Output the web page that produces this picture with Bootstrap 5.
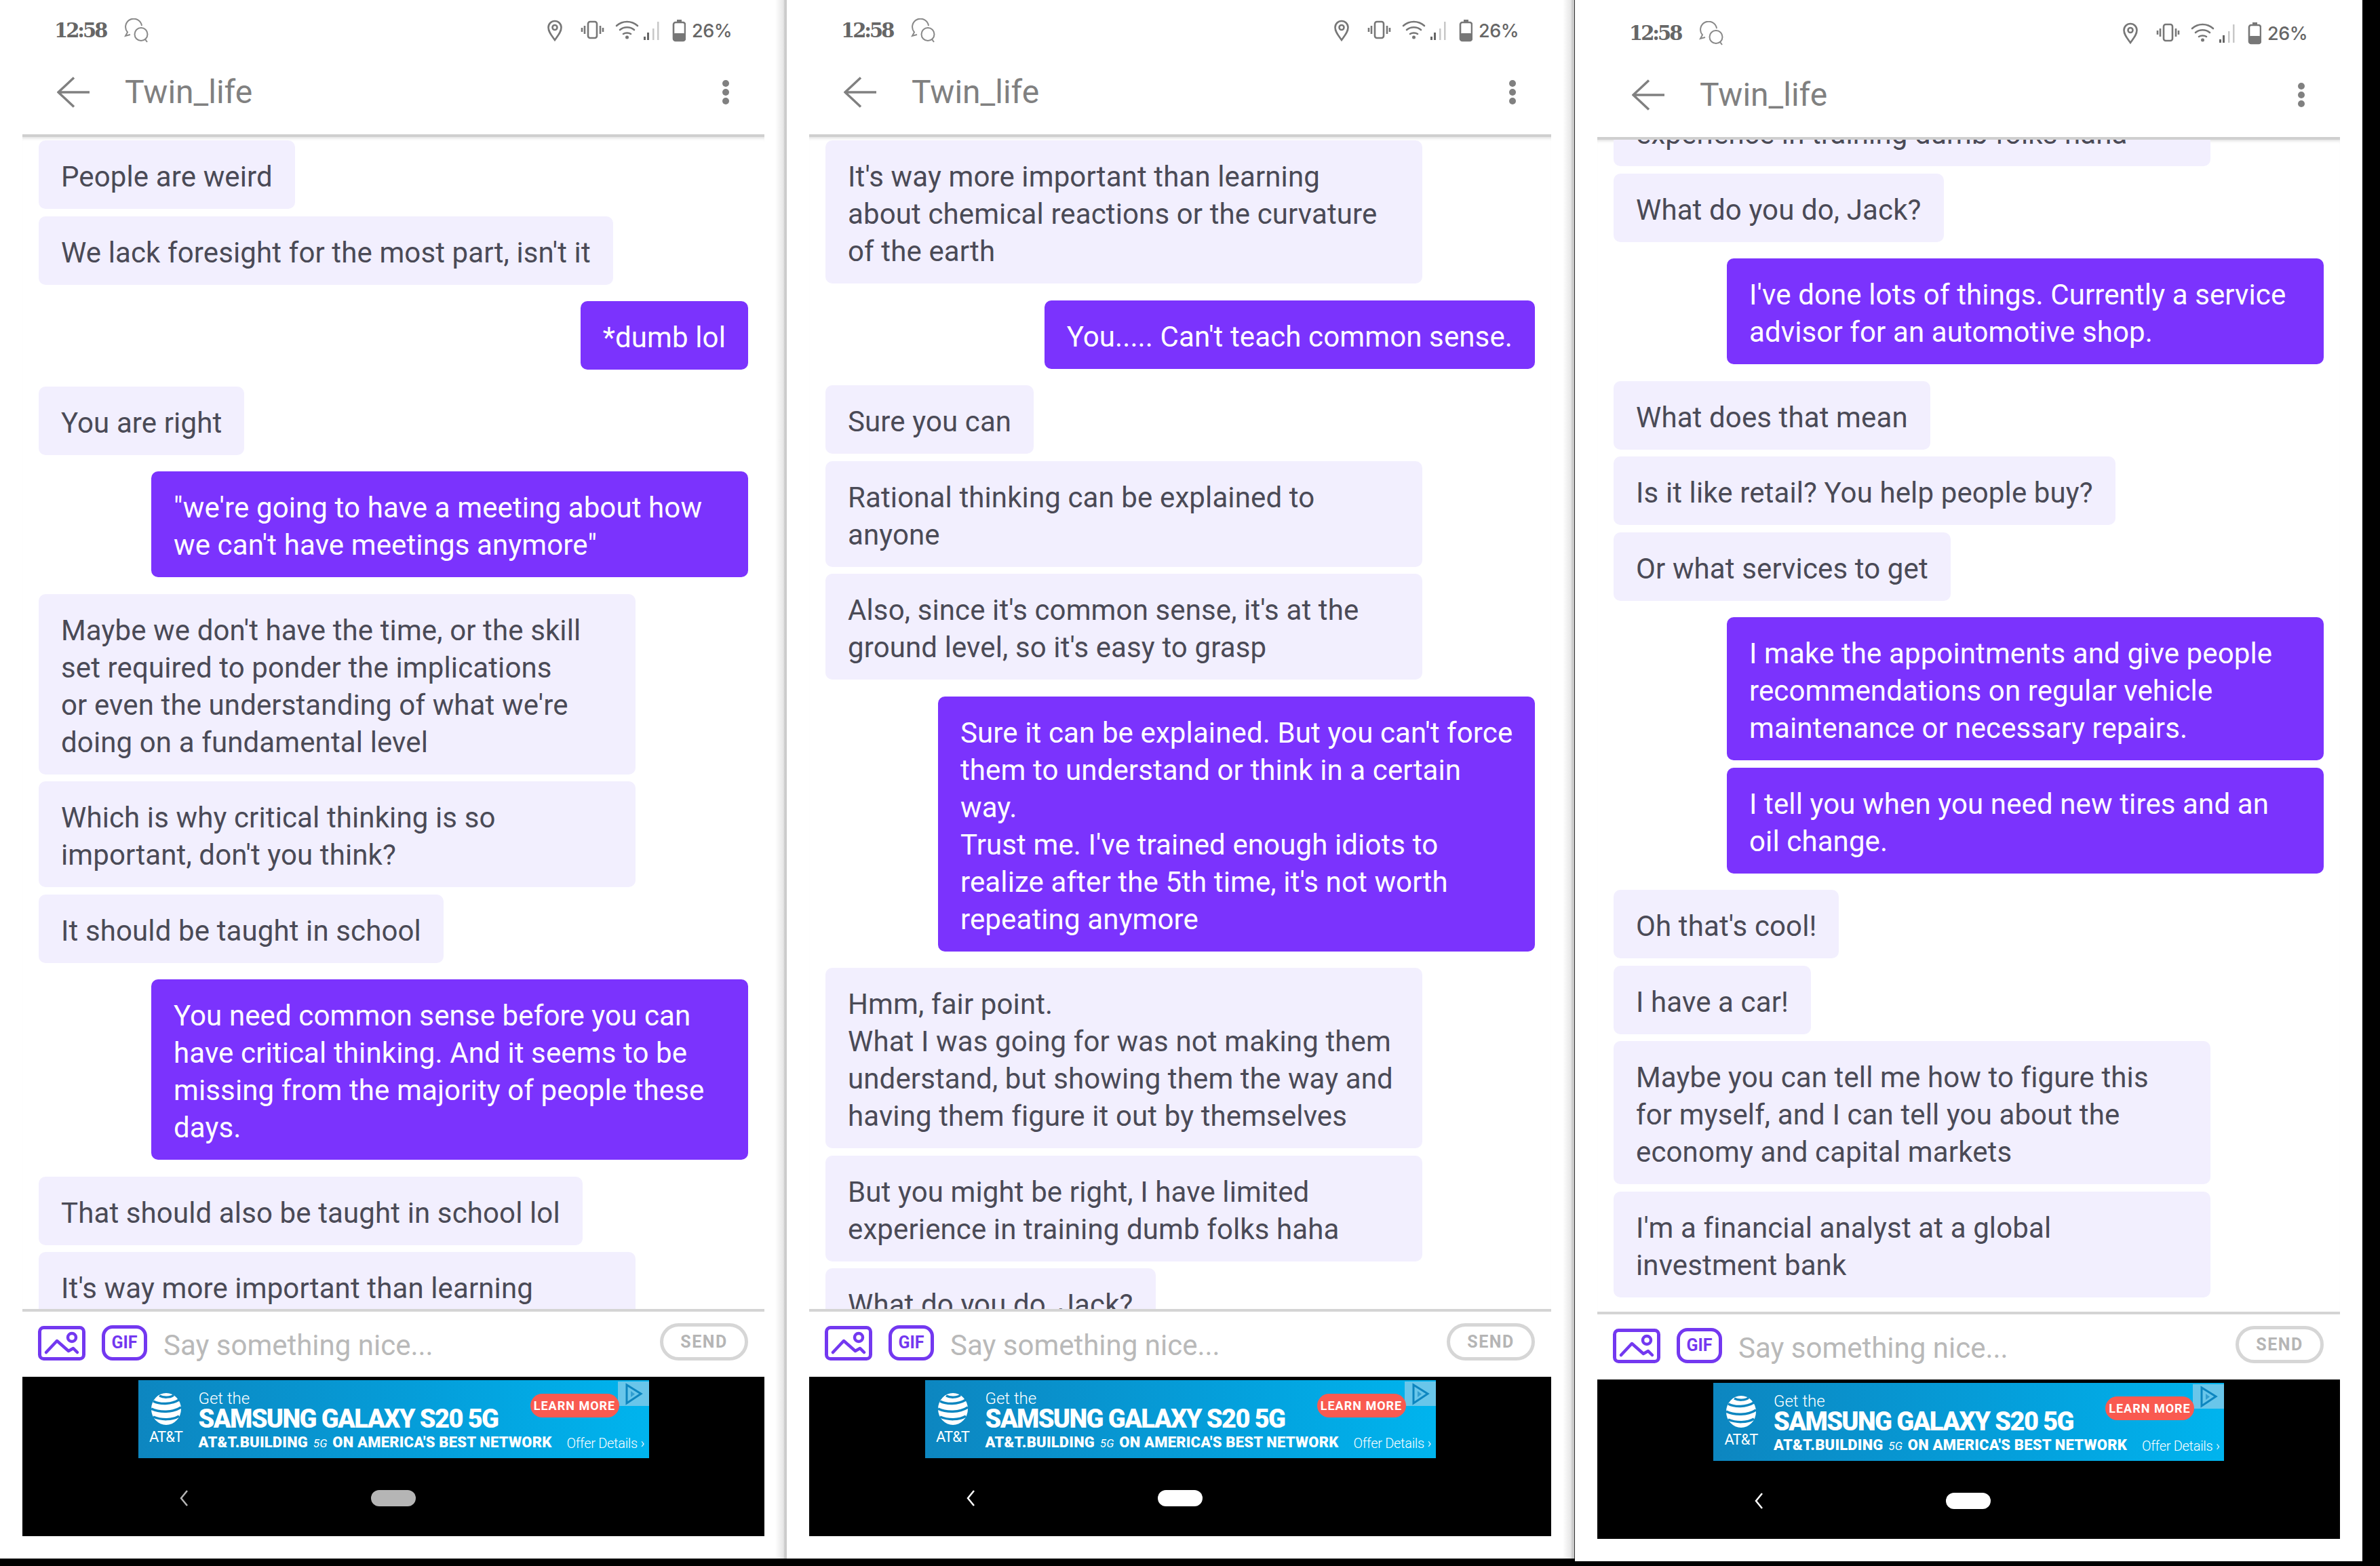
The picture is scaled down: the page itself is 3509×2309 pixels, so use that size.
<!DOCTYPE html>
<html lang="en">
<head>
    <meta charset="UTF-8">
    <meta name="viewport" content="width=device-width, initial-scale=1">
    <title>Twin_life</title>
    <link rel="stylesheet" href="https://cdn.jsdelivr.net/npm/bootstrap@5.3.0/dist/css/bootstrap.min.css">
    <style>
        body { background: #000; width: 3509px; height: 2309px; overflow: hidden; font-family: Roboto, "Liberation Sans", sans-serif; }
        .phone-shot { width: 1160px; height: 2298px; flex: none; padding: 0 33px; background: linear-gradient(to left, #cbcbcb 3px, #e6e6e6 5px, #fff 17px); }
        .phone-shot.shot-mid { width: 1162px; padding-right: 34px; border-right: 1px solid #333; }
        .phone-shot.shot-last { width: 1161px; height: 2302px; padding-top: 4px; background: #fff; margin-left: 0; }
        .phone-inner { height: 100%; padding-bottom: 33px; background: #fff; }
        .status-row { height: 90px; padding: 0 48px 0 47px; color: #666; }
        .status-time { font: 600 29px/1 "DejaVu Serif", serif; letter-spacing: -3px; }
        .status-chat { margin-left: 27px; }
        .status-pct { font: 500 27px/1 Inter, sans-serif; margin-left: 9px; letter-spacing: -.5px; }
        .title-row { height: 108px; padding: 0 52px 16px 51px; }
        .title-name { font-size: 48px; color: #808080; margin-left: 52px; }
        .msg-pane { height: 1732px; padding: 5px 24px 0; border-top: 4px solid #cfcfcf; box-shadow: inset 0 5px 4px -3px rgba(0,0,0,.12); }
        .msg-bubble { flex: none; padding: 26px 33px 20px; font-size: 42px; line-height: 55px; letter-spacing: .12px; border-radius: 10px; white-space: nowrap; }
        .msg-in { align-self: flex-start; background: #f2effe; color: #4a4a56; }
        .msg-out { align-self: flex-end; background: #7b33fd; color: #fff; }
        .msg-wide { width: 880px; }
        .msg-in + .msg-in, .msg-out + .msg-out { margin-top: 10.5px; }
        .msg-in + .msg-out, .msg-out + .msg-in { margin-top: 24.5px; }
        .msg-scrolled { margin-top: -67px; }
        .input-row { height: 100px; padding: 0 24px 4px 23px; border-top: 4px solid #d4d4d4; }
        .gif-btn { width: 67px; height: 52px; margin-left: 24px; border: 5px solid #7338f0; border-radius: 16px; color: #7338f0; font-weight: 700; font-size: 25px; }
        .say-text { margin-left: 24px; padding-top: 6px; font-size: 42px; color: #b9b9b9; }
        .send-btn { width: 130px; height: 55px; margin-bottom: 3px; border: 5px solid #d6d6d6; border-radius: 28px; color: #b5b5b5; font-weight: 700; font-size: 25px; letter-spacing: 1.5px; }
        .ad-area { height: 235px; background: #000; padding-top: 5px; }
        .ad-banner { width: 753px; height: 115px; margin: 0 auto; padding-left: 12px; color: #fff; background: linear-gradient(to right, #0d86c0, #04a0dc 60%, #00b4ee); }
        .ad-logo { width: 58px; padding-top: 19px; font-size: 22px; line-height: 1; letter-spacing: -1px; }
        .ad-logo svg { display: block; margin: 0 auto 7px; }
        .ad-copy { margin-left: 19px; padding-top: 15px; width: 660px; }
        .ad-get { font-size: 24px; line-height: 24px; font-weight: 300; }
        .ad-main { font-size: 38px; line-height: 36px; font-weight: 900; letter-spacing: -1.6px; }
        .ad-tag { margin-top: 6px; font-size: 22px; line-height: 22px; font-weight: 900; letter-spacing: .2px; white-space: nowrap; }
        .ad-tag i { font-size: 17px; font-weight: 400; margin: 0 2px; }
        .ad-offer { margin-left: 22px; font-size: 20px; font-weight: 300; letter-spacing: -.3px; }
        .ad-more { top: 20px; left: 578px; width: 131px; height: 35px; background: #f95a50; border-radius: 18px; font-size: 18px; font-weight: 700; letter-spacing: 1px; }
        .ad-choice { top: 2px; right: 0; width: 46px; height: 36px; background: #69c6ea; }
        .nav-row { padding: 47px 0 0 231px; }
        .nav-pill { width: 66px; height: 24px; margin-left: 268px; background: #fff; border-radius: 12px; }
        .nav-pill.pill-dim { background: #b5b5b5; }
        .chev-dim { color: #b5b5b5; }
    </style>
</head>
<body>

<svg width="0" height="0" class="position-absolute">
    <symbol id="ic-chat" viewBox="0 0 36 36">
        <path d="M26 11A12 12 0 1 0 5 20.500L2 26l7-2" fill="none" stroke="#888" stroke-width="2"/>
        <circle cx="25" cy="23.500" r="9.500" fill="#fff" stroke="#888" stroke-width="2"/>
        <path d="M31 31l3 4" stroke="#888" stroke-width="2"/>
    </symbol>
    <symbol id="ic-status" viewBox="0 0 204 34">
        <g fill="none" stroke="#777" stroke-width="2.6">
            <path d="M11 31C6 24 1.500 19 1.500 12.500a9.500 9.500 0 0 1 19 0C20.500 19 16 24 11 31z"/>
            <circle cx="11" cy="12.500" r="3.500"/>
            <rect x="60" y="4" width="13" height="24" rx="3"/>
            <path d="M55 10v12M51 13v6M78 10v12M82 13v6"/>
            <path d="M102 10c9-8 22-8 31 0M107 16c6-5 15-5 21 0M112 22c3-2 8-2 11 0" stroke-linecap="round"/>
        </g>
        <circle cx="117.500" cy="27" r="2.500" fill="#777"/>
        <g fill="#666">
            <rect x="142" y="26" width="3" height="5"/><rect x="147" y="20" width="3" height="11"/>
        </g>
        <g fill="#c8c8c8">
            <rect x="155" y="14" width="2.500" height="17"/><rect x="162" y="4" width="2.500" height="27"/>
        </g>
        <rect x="186" y="5" width="17" height="27" rx="3" fill="none" stroke="#777" stroke-width="2.600"/>
        <rect x="186" y="21" width="17" height="11" rx="2" fill="#777"/>
        <rect x="191" y="1" width="7" height="3" fill="#777"/>
    </symbol>
    <symbol id="ic-back" viewBox="0 0 48 46">
        <path d="M25 1.500L2 23l23 21.500M2 23h46" fill="none" stroke="#808080" stroke-width="3.500"/>
    </symbol>
    <symbol id="ic-photo" viewBox="0 0 70 51">
        <rect x="2.500" y="2.500" width="65" height="46" rx="6" fill="none" stroke="#7338f0" stroke-width="5"/>
        <circle cx="50" cy="17" r="6" fill="none" stroke="#7338f0" stroke-width="4.500"/>
        <path d="M12 39l16-17 17 15 7-4 6 6" fill="none" stroke="#7338f0" stroke-width="4.500" stroke-linecap="round" stroke-linejoin="round"/>
    </symbol>
    <symbol id="ic-globe" viewBox="0 0 44 47">
        <ellipse cx="22" cy="23.500" rx="22" ry="23.500" fill="#fff"/>
        <path d="M3 12c10 5 26 5 38-2M0 23c12 6 32 6 44-2M3 35c12 5 28 5 38-1M12 4c6 3 16 3 21-1" fill="none" stroke="#0d86c0" stroke-width="3.500"/>
    </symbol>
    <symbol id="ic-choice" viewBox="0 0 46 36">
        <path d="M13 5v27l21-14z" fill="none" stroke="#0d86c0" stroke-width="3"/>
        <path d="M19 14v9l6-4.500z" fill="#0d86c0" opacity=".6"/>
    </symbol>
    <symbol id="ic-chev" viewBox="0 0 15 24">
        <path d="M12 1L3 12l9 11" fill="none" stroke="currentColor" stroke-width="2.500"/>
    </symbol>
</svg>

<div class="d-flex">

    <!-- first screenshot -->
    <div class="phone-shot">
        <div class="phone-inner d-flex flex-column">
            <div class="status-row d-flex align-items-center">
                <span class="status-time">12:58</span>
                <svg width="36" height="36" class="status-chat"><use href="#ic-chat"/></svg>
                <svg width="204" height="34" class="ms-auto"><use href="#ic-status"/></svg>
                <span class="status-pct">26%</span>
            </div>
            <div class="title-row d-flex align-items-center">
                <svg width="48" height="46"><use href="#ic-back"/></svg>
                <span class="title-name">Twin_life</span>
                <svg width="10" height="36" class="ms-auto"><circle cx="5" cy="5" r="5" fill="#808080"/><circle cx="5" cy="18" r="5" fill="#808080"/><circle cx="5" cy="31" r="5" fill="#808080"/></svg>
            </div>
            <div class="msg-pane d-flex flex-column overflow-hidden">
                <div class="msg-bubble msg-in">People are weird</div>
                <div class="msg-bubble msg-in">We lack foresight for the most part, isn't it</div>
                <div class="msg-bubble msg-out">*dumb lol</div>
                <div class="msg-bubble msg-in">You are right</div>
                <div class="msg-bubble msg-out msg-wide">"we're going to have a meeting about how<br>we can't have meetings anymore"</div>
                <div class="msg-bubble msg-in msg-wide">Maybe we don't have the time, or the skill<br>set required to ponder the implications<br>or even the understanding of what we're<br>doing on a fundamental level</div>
                <div class="msg-bubble msg-in msg-wide">Which is why critical thinking is so<br>important, don't you think?</div>
                <div class="msg-bubble msg-in">It should be taught in school</div>
                <div class="msg-bubble msg-out msg-wide">You need common sense before you can<br>have critical thinking. And it seems to be<br>missing from the majority of people these<br>days.</div>
                <div class="msg-bubble msg-in">That should also be taught in school lol</div>
                <div class="msg-bubble msg-in msg-wide">It's way more important than learning</div>
            </div>
            <div class="input-row d-flex align-items-center">
                <svg width="70" height="51"><use href="#ic-photo"/></svg>
                <div class="gif-btn d-flex align-items-center justify-content-center">GIF</div>
                <span class="say-text">Say something nice...</span>
                <div class="send-btn d-flex align-items-center justify-content-center ms-auto">SEND</div>
            </div>
            <div class="ad-area">
                <div class="ad-banner d-flex position-relative">
                    <div class="ad-logo text-center"><svg width="44" height="47"><use href="#ic-globe"/></svg>AT&amp;T</div>
                    <div class="ad-copy">
                        <div class="ad-get">Get the</div>
                        <div class="ad-main">SAMSUNG GALAXY S20 5G</div>
                        <div class="ad-tag d-flex align-items-center"><span>AT&amp;T.BUILDING <i>5G</i> ON AMERICA'S BEST NETWORK</span><span class="ad-offer">Offer Details &#x203A;</span></div>
                    </div>
                    <div class="ad-choice position-absolute"><svg width="46" height="36" class="d-block"><use href="#ic-choice"/></svg></div>
                    <div class="ad-more position-absolute d-flex align-items-center justify-content-center">LEARN MORE</div>
                </div>
                <div class="nav-row d-flex align-items-center text-white">
                    <svg width="15" height="24" class="chev-dim"><use href="#ic-chev"/></svg>
                    <div class="nav-pill pill-dim"></div>
                </div>
            </div>
        </div>
    </div>

    <!-- second screenshot -->
    <div class="phone-shot shot-mid">
        <div class="phone-inner d-flex flex-column">
            <div class="status-row d-flex align-items-center">
                <span class="status-time">12:58</span>
                <svg width="36" height="36" class="status-chat"><use href="#ic-chat"/></svg>
                <svg width="204" height="34" class="ms-auto"><use href="#ic-status"/></svg>
                <span class="status-pct">26%</span>
            </div>
            <div class="title-row d-flex align-items-center">
                <svg width="48" height="46"><use href="#ic-back"/></svg>
                <span class="title-name">Twin_life</span>
                <svg width="10" height="36" class="ms-auto"><circle cx="5" cy="5" r="5" fill="#808080"/><circle cx="5" cy="18" r="5" fill="#808080"/><circle cx="5" cy="31" r="5" fill="#808080"/></svg>
            </div>
            <div class="msg-pane d-flex flex-column overflow-hidden">
                <div class="msg-bubble msg-in msg-wide">It's way more important than learning<br>about chemical reactions or the curvature<br>of the earth</div>
                <div class="msg-bubble msg-out">You..... Can't teach common sense.</div>
                <div class="msg-bubble msg-in">Sure you can</div>
                <div class="msg-bubble msg-in msg-wide">Rational thinking can be explained to<br>anyone</div>
                <div class="msg-bubble msg-in msg-wide">Also, since it's common sense, it's at the<br>ground level, so it's easy to grasp</div>
                <div class="msg-bubble msg-out msg-wide">Sure it can be explained. But you can't force<br>them to understand or think in a certain<br>way.<br>Trust me. I've trained enough idiots to<br>realize after the 5th time, it's not worth<br>repeating anymore</div>
                <div class="msg-bubble msg-in msg-wide">Hmm, fair point.<br>What I was going for was not making them<br>understand, but showing them the way and<br>having them figure it out by themselves</div>
                <div class="msg-bubble msg-in msg-wide">But you might be right, I have limited<br>experience in training dumb folks haha</div>
                <div class="msg-bubble msg-in">What do you do, Jack?</div>
            </div>
            <div class="input-row d-flex align-items-center">
                <svg width="70" height="51"><use href="#ic-photo"/></svg>
                <div class="gif-btn d-flex align-items-center justify-content-center">GIF</div>
                <span class="say-text">Say something nice...</span>
                <div class="send-btn d-flex align-items-center justify-content-center ms-auto">SEND</div>
            </div>
            <div class="ad-area">
                <div class="ad-banner d-flex position-relative">
                    <div class="ad-logo text-center"><svg width="44" height="47"><use href="#ic-globe"/></svg>AT&amp;T</div>
                    <div class="ad-copy">
                        <div class="ad-get">Get the</div>
                        <div class="ad-main">SAMSUNG GALAXY S20 5G</div>
                        <div class="ad-tag d-flex align-items-center"><span>AT&amp;T.BUILDING <i>5G</i> ON AMERICA'S BEST NETWORK</span><span class="ad-offer">Offer Details &#x203A;</span></div>
                    </div>
                    <div class="ad-choice position-absolute"><svg width="46" height="36" class="d-block"><use href="#ic-choice"/></svg></div>
                    <div class="ad-more position-absolute d-flex align-items-center justify-content-center">LEARN MORE</div>
                </div>
                <div class="nav-row d-flex align-items-center text-white">
                    <svg width="15" height="24"><use href="#ic-chev"/></svg>
                    <div class="nav-pill"></div>
                </div>
            </div>
        </div>
    </div>

    <!-- third screenshot -->
    <div class="phone-shot shot-last">
        <div class="phone-inner d-flex flex-column">
            <div class="status-row d-flex align-items-center">
                <span class="status-time">12:58</span>
                <svg width="36" height="36" class="status-chat"><use href="#ic-chat"/></svg>
                <svg width="204" height="34" class="ms-auto"><use href="#ic-status"/></svg>
                <span class="status-pct">26%</span>
            </div>
            <div class="title-row d-flex align-items-center">
                <svg width="48" height="46"><use href="#ic-back"/></svg>
                <span class="title-name">Twin_life</span>
                <svg width="10" height="36" class="ms-auto"><circle cx="5" cy="5" r="5" fill="#808080"/><circle cx="5" cy="18" r="5" fill="#808080"/><circle cx="5" cy="31" r="5" fill="#808080"/></svg>
            </div>
            <div class="msg-pane d-flex flex-column overflow-hidden">
                <div class="msg-bubble msg-in msg-wide msg-scrolled">experience in training dumb folks haha</div>
                <div class="msg-bubble msg-in">What do you do, Jack?</div>
                <div class="msg-bubble msg-out msg-wide">I've done lots of things. Currently a service<br>advisor for an automotive shop.</div>
                <div class="msg-bubble msg-in">What does that mean</div>
                <div class="msg-bubble msg-in">Is it like retail? You help people buy?</div>
                <div class="msg-bubble msg-in">Or what services to get</div>
                <div class="msg-bubble msg-out msg-wide">I make the appointments and give people<br>recommendations on regular vehicle<br>maintenance or necessary repairs.</div>
                <div class="msg-bubble msg-out msg-wide">I tell you when you need new tires and an<br>oil change.</div>
                <div class="msg-bubble msg-in">Oh that's cool!</div>
                <div class="msg-bubble msg-in">I have a car!</div>
                <div class="msg-bubble msg-in msg-wide">Maybe you can tell me how to figure this<br>for myself, and I can tell you about the<br>economy and capital markets</div>
                <div class="msg-bubble msg-in msg-wide">I'm a financial analyst at a global<br>investment bank</div>
            </div>
            <div class="input-row d-flex align-items-center">
                <svg width="70" height="51"><use href="#ic-photo"/></svg>
                <div class="gif-btn d-flex align-items-center justify-content-center">GIF</div>
                <span class="say-text">Say something nice...</span>
                <div class="send-btn d-flex align-items-center justify-content-center ms-auto">SEND</div>
            </div>
            <div class="ad-area">
                <div class="ad-banner d-flex position-relative">
                    <div class="ad-logo text-center"><svg width="44" height="47"><use href="#ic-globe"/></svg>AT&amp;T</div>
                    <div class="ad-copy">
                        <div class="ad-get">Get the</div>
                        <div class="ad-main">SAMSUNG GALAXY S20 5G</div>
                        <div class="ad-tag d-flex align-items-center"><span>AT&amp;T.BUILDING <i>5G</i> ON AMERICA'S BEST NETWORK</span><span class="ad-offer">Offer Details &#x203A;</span></div>
                    </div>
                    <div class="ad-choice position-absolute"><svg width="46" height="36" class="d-block"><use href="#ic-choice"/></svg></div>
                    <div class="ad-more position-absolute d-flex align-items-center justify-content-center">LEARN MORE</div>
                </div>
                <div class="nav-row d-flex align-items-center text-white">
                    <svg width="15" height="24"><use href="#ic-chev"/></svg>
                    <div class="nav-pill"></div>
                </div>
            </div>
        </div>
    </div>

</div>

<script src="https://cdn.jsdelivr.net/npm/bootstrap@5.3.0/dist/js/bootstrap.bundle.min.js"></script>
</body>
</html>
